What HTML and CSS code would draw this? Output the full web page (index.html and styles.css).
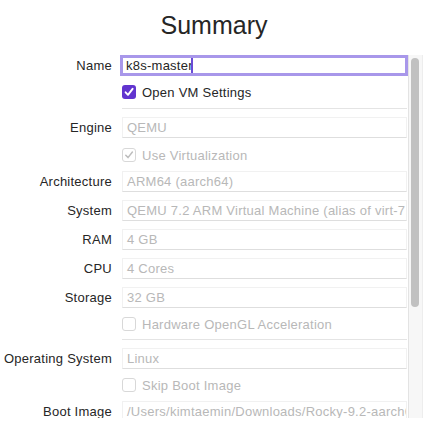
FILE: index.html
```html
<!DOCTYPE html>
<html>
<head>
<meta charset="utf-8">
<link rel="stylesheet" href="styles.css">
</head>
<body>
<div class="window">
  <h1 class="title">Summary</h1>
  <div class="pane">
    <div class="form">
      <div class="row">
        <div class="label">Name</div>
        <div class="control"><div class="focus">k8s-maste<span class="last">r</span><span class="caret"></span></div></div>
      </div>
      <div class="row crow mt6">
        <div class="label"></div>
        <div class="control checkline">
          <span class="check on"><svg width="10" height="10" viewBox="0 0 10 10"><path d="M1.6 5.3 L4 7.8 L8.6 1.8" fill="none" stroke="#fff" stroke-width="1.9" stroke-linecap="round" stroke-linejoin="round"/></svg></span>
          <span class="ctext">Open VM Settings</span>
        </div>
      </div>
      <div class="sep mt6"></div>
      <div class="row mt8">
        <div class="label">Engine</div>
        <div class="control"><div class="field">QEMU</div></div>
      </div>
      <div class="row crow mt7">
        <div class="label"></div>
        <div class="control checkline">
          <span class="check off"><svg width="10" height="10" viewBox="0 0 10 10"><path d="M1.8 5.2 L4 7.6 L8.4 2" fill="none" stroke="#bdbdbd" stroke-width="1.5" stroke-linecap="round" stroke-linejoin="round"/></svg></span>
          <span class="ctext dim">Use Virtualization</span>
        </div>
      </div>
      <div class="row mt6">
        <div class="label">Architecture</div>
        <div class="control"><div class="field">ARM64 (aarch64)</div></div>
      </div>
      <div class="row mt8">
        <div class="label">System</div>
        <div class="control"><div class="field">QEMU 7.2 ARM Virtual Machine (alias of virt-7.2)</div></div>
      </div>
      <div class="row mt8">
        <div class="label">RAM</div>
        <div class="control"><div class="field">4 GB</div></div>
      </div>
      <div class="row mt8">
        <div class="label">CPU</div>
        <div class="control"><div class="field">4 Cores</div></div>
      </div>
      <div class="row mt8">
        <div class="label">Storage</div>
        <div class="control"><div class="field">32 GB</div></div>
      </div>
      <div class="row crow mt6">
        <div class="label"></div>
        <div class="control checkline">
          <span class="check off"></span>
          <span class="ctext dim">Hardware OpenGL Acceleration</span>
        </div>
      </div>
      <div class="sep mt5"></div>
      <div class="row mt8">
        <div class="label">Operating System</div>
        <div class="control"><div class="field">Linux</div></div>
      </div>
      <div class="row crow mt6">
        <div class="label"></div>
        <div class="control checkline">
          <span class="check off"></span>
          <span class="ctext dim">Skip Boot Image</span>
        </div>
      </div>
      <div class="row mt6">
        <div class="label">Boot Image</div>
        <div class="control"><div class="field">/Users/kimtaemin/Downloads/Rocky-9.2-aarch64-minimal.iso</div></div>
      </div>
    </div>
    <div class="scrollbar"><div class="thumb"></div></div>
  </div>
</div>
</body>
</html>
```

FILE: styles.css
```css
html, body {
  margin: 0;
  padding: 0;
  background: #ffffff;
}

.window {
  width: 428px;
  height: 429px;
  overflow: hidden;
  font-family: "Liberation Sans", Arial, sans-serif;
  font-size: 13px;
  letter-spacing: 0.25px;
  color: #262626;
  background: #ffffff;
}

.title {
  margin: 0;
  height: 55px;
  box-sizing: border-box;
  padding-top: 11px;
  font-size: 25px;
  font-weight: normal;
  line-height: 28px;
  letter-spacing: 0;
  text-align: center;
  color: #262626;
}

.pane {
  display: flex;
  height: 363px;
  overflow: hidden;
}

.form {
  width: 408px;
  flex: none;
  box-sizing: border-box;
  padding-right: 1px;
  display: flex;
  flex-direction: column;
}

.row {
  display: flex;
  align-items: center;
  flex: none;
}

.crow {
  height: 20px;
}

.label {
  width: 112px;
  margin-right: 10px;
  flex: none;
  text-align: right;
  white-space: nowrap;
  color: #262626;
}

.control {
  flex: 1;
  min-width: 0;
}

.mt5 { margin-top: 5px; }
.mt6 { margin-top: 6px; }
.mt7 { margin-top: 7px; }
.mt8 { margin-top: 8px; }

.focus {
  height: 21px;
  box-sizing: border-box;
  margin: 0 -1px 0 -2px;
  border: 3px solid #a897ea;
  padding-left: 3px;
  line-height: 15px;
  color: #262626;
  background: #ffffff;
  white-space: nowrap;
  overflow: hidden;
}

.last {
  letter-spacing: 0;
}

.caret {
  display: inline-block;
  width: 2px;
  height: 15px;
  margin-left: -2px;
  vertical-align: top;
  background: #6a4bd6;
}

.field {
  height: 21px;
  box-sizing: border-box;
  border: 1px solid #f1f1f1;
  border-bottom-color: #dedede;
  padding-left: 4px;
  line-height: 19px;
  color: #b8b8b8;
  white-space: nowrap;
  overflow: hidden;
}

.checkline {
  display: flex;
  align-items: center;
}

.check {
  width: 14px;
  height: 14px;
  box-sizing: border-box;
  border-radius: 3px;
  margin-right: 6px;
  flex: none;
  display: flex;
  align-items: center;
  justify-content: center;
}

.check.on {
  background: #6134cf;
}

.check.off {
  background: #ffffff;
  border: 1px solid #d8d8d8;
}

.ctext {
  white-space: nowrap;
  color: #262626;
}

.ctext.dim {
  color: #b8b8b8;
}

.sep {
  height: 1px;
  margin-left: 122px;
  background: #e4e4e4;
  flex: none;
}

.scrollbar {
  width: 15px;
  flex: none;
  box-sizing: border-box;
  border-left: 1px solid #e3e3e3;
  border-right: 1px solid #ededed;
  background: #f7f7f7;
  padding: 3px 0 0 2px;
}

.thumb {
  width: 8px;
  height: 249px;
  border-radius: 4px;
  background: #c1c1c1;
}
```
